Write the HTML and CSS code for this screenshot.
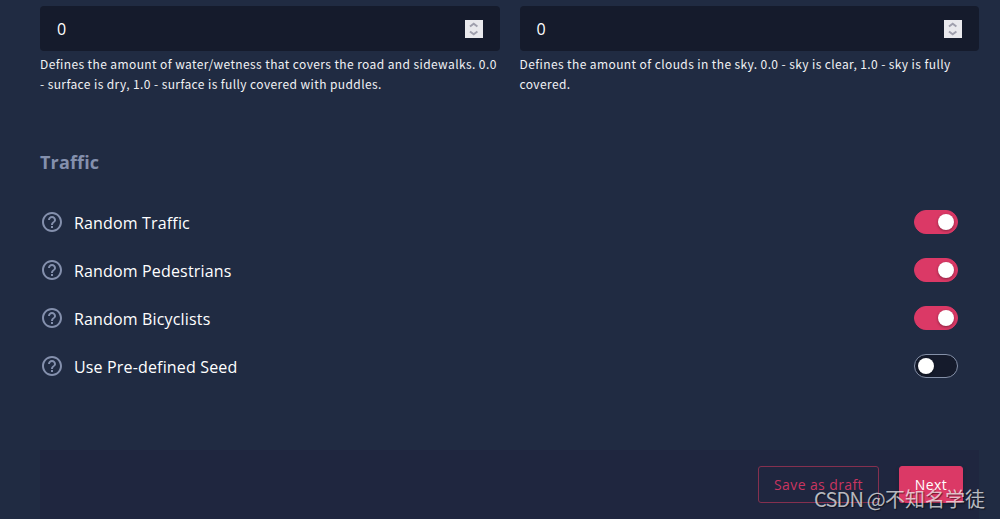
FILE: index.html
```
<!DOCTYPE html>
<html lang="en">
<head>
    <meta charset="UTF-8">
    <meta name="viewport" content="width=device-width, initial-scale=1.0">
    <title>Simulation</title>
    <link rel="stylesheet" href="styles.css">
</head>
<body>

<svg class="sprite">
    <symbol id="help" viewBox="0 0 24 24">
        <path d="M11 18h2v-2h-2v2zm1-16C6.48 2 2 6.48 2 12s4.48 10 10 10 10-4.48 10-10S17.52 2 12 2zm0 18c-4.41 0-8-3.59-8-8s3.59-8 8-8 8 3.59 8 8-3.59 8-8 8zm0-14c-2.21 0-4 1.79-4 4h2c0-1.1.9-2 2-2s2 .9 2 2c0 2-3 1.75-3 5h2c0-2.25 3-2.5 3-5 0-2.21-1.79-4-4-4z"/>
    </symbol>
    <symbol id="spin" viewBox="0 0 18 18">
        <path d="M5 6.500L8.700 3.800l3.700 2.700M5 11.500L8.700 14.200l3.700-2.700"/>
    </symbol>
</svg>

<main class="container">
    <div class="fields">
        <div class="field">
            <div class="input"><span>0</span><svg class="spinner"><use href="#spin"/></svg></div>
            <p class="hint">Defines the amount of water/wetness that covers the road and sidewalks. 0.0 - surface is dry, 1.0 - surface is fully covered with puddles.</p>
        </div>
        <div class="field">
            <div class="input"><span>0</span><svg class="spinner"><use href="#spin"/></svg></div>
            <p class="hint">Defines the amount of clouds in the sky. 0.0 - sky is clear, 1.0 - sky is fully covered.</p>
        </div>
    </div>

    <h2>Traffic</h2>

    <div class="options">
        <div class="option">
            <svg class="help"><use href="#help"/></svg>
            <span class="label">Random Traffic</span>
            <span class="toggle on"></span>
        </div>
        <div class="option">
            <svg class="help"><use href="#help"/></svg>
            <span class="label">Random Pedestrians</span>
            <span class="toggle on"></span>
        </div>
        <div class="option">
            <svg class="help"><use href="#help"/></svg>
            <span class="label">Random Bicyclists</span>
            <span class="toggle on"></span>
        </div>
        <div class="option">
            <svg class="help"><use href="#help"/></svg>
            <span class="label">Use Pre-defined Seed</span>
            <span class="toggle"></span>
        </div>
    </div>

    <footer class="actions">
        <button class="btn outline">Save as draft</button>
        <button class="btn primary">Next</button>
    </footer>
</main>

<div class="watermark"><span class="site">CSDN @</span>不知名学徒</div>

</body>
</html>
```

FILE: styles.css
```
* {
    box-sizing: border-box;
}
body {
    margin: 0;
    height: 519px;
    overflow: hidden;
    background: #202b42;
    color: #fff;
    font-family: "Open Sans", "Noto Sans", sans-serif;
}
.sprite {
    display: none;
}
.container {
    display: flex;
    flex-direction: column;
    height: 519px;
    padding: 6px 21px 0 40px;
}
.fields {
    display: grid;
    grid-template-columns: 1fr 1fr;
    gap: 20px;
}
.input {
    display: flex;
    align-items: center;
    justify-content: space-between;
    height: 45px;
    padding: 0 17px;
    border-radius: 4px;
    background: #151b2c;
    font-size: 16px;
}
.spinner {
    width: 18px;
    height: 18px;
    background: #e9e9ed;
    fill: none;
    stroke: #9f9fad;
    stroke-width: 2;
}
.hint {
    margin: 3px 0 0;
    color: #f0f1f4;
    font-family: "Noto Sans CJK SC", sans-serif;
    font-size: 12px;
    line-height: 20px;
    letter-spacing: 0.4px;
}
h2 {
    margin: 55px 0 0;
    color: #8490ad;
    font-size: 18px;
    font-weight: 700;
    line-height: 26px;
    letter-spacing: 0.15px;
}
.options {
    margin-top: 23px;
}
.option {
    display: flex;
    align-items: center;
    height: 48px;
    padding-right: 21px;
}
.help {
    width: 24px;
    height: 24px;
    fill: #8490ad;
}
.label {
    margin-left: 10px;
    padding-top: 1px;
    font-size: 16px;
    letter-spacing: 0.16px;
}
.toggle {
    display: flex;
    align-items: center;
    width: 44px;
    height: 24px;
    margin-left: auto;
    padding: 0 3px;
    border: 1px solid #8490a8;
    border-radius: 12px;
    background: #151b2c;
}
.toggle::before {
    content: "";
    width: 16px;
    height: 16px;
    border-radius: 50%;
    background: #fff;
    box-shadow: 0 1px 3px rgba(0, 0, 0, 0.4);
}
.toggle.on {
    justify-content: flex-end;
    border-color: #db3966;
    background: #db3966;
}
.actions {
    display: flex;
    flex: 1;
    align-items: flex-start;
    justify-content: flex-end;
    gap: 20px;
    margin-top: 60px;
    padding: 16px 16px 0;
    background: #1f263f;
}
.btn {
    height: 37px;
    padding: 0;
    border: 1px solid #db3966;
    border-radius: 3px;
    font-family: inherit;
    font-size: 14px;
    letter-spacing: 0.4px;
    white-space: nowrap;
}
.outline {
    width: 121px;
    border-color: #85304f;
    background: none;
    color: #c93560;
}
.primary {
    width: 64px;
    background: #db3966;
    color: #fff;
    box-shadow: 0 2px 4px rgba(0, 0, 0, 0.2);
}
/* sits over the action bar */
.watermark {
    position: absolute;
    right: 15px;
    bottom: 5px;
    color: rgba(255, 255, 255, 0.7);
    font-family: "Noto Sans CJK SC", sans-serif;
    font-size: 20px;
    line-height: 30px;
    text-shadow: 1px 1px 1px rgba(0, 0, 0, 0.5);
    white-space: nowrap;
}
.site {
    letter-spacing: -0.8px;
}
```
